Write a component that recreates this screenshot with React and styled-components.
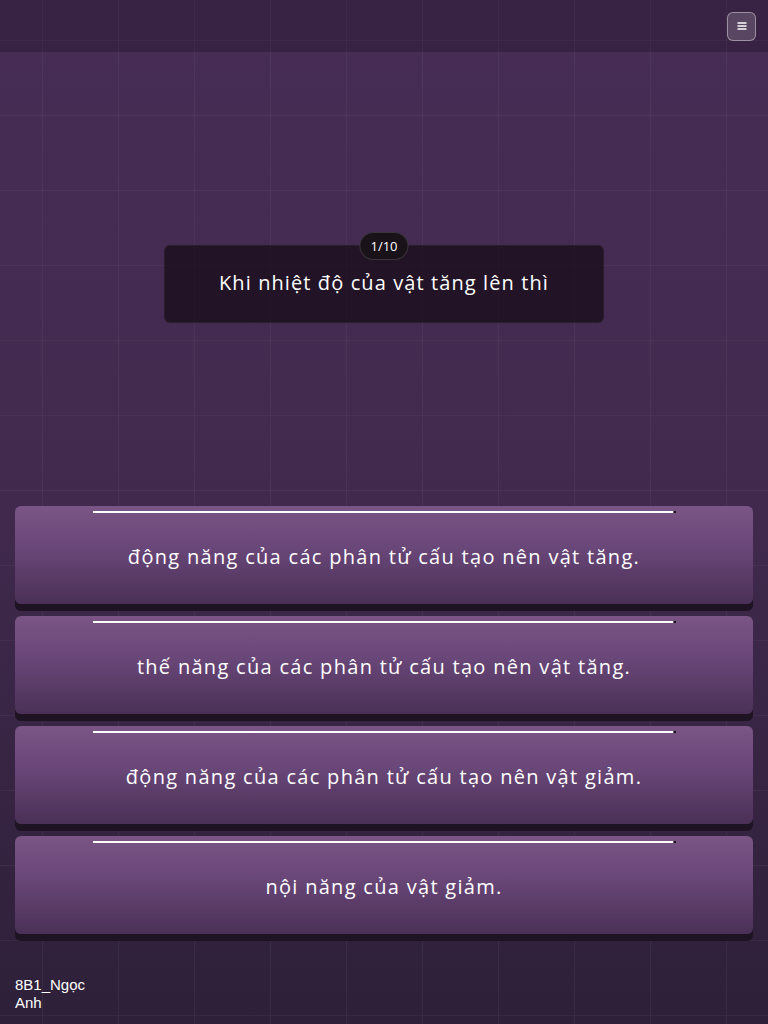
import React from "react";
import styled, { createGlobalStyle } from "styled-components";

const answers = [
  "động năng của các phân tử cấu tạo nên vật tăng.",
  "thế năng của các phân tử cấu tạo nên vật tăng.",
  "động năng của các phân tử cấu tạo nên vật giảm.",
  "nội năng của vật giảm.",
];

function MenuIcon() {
  return (
    <svg width="10" height="10" viewBox="0 0 10 10">
      <path d="M1 2h8M1 5h8M1 8h8" stroke="#fff" strokeWidth="1.4" strokeLinecap="round" />
    </svg>
  );
}

export default function App() {
  return (
    <>
      <GlobalStyle />
      <Page>
        <Header>
          <MenuButton>
            <MenuIcon />
          </MenuButton>
        </Header>
        <QuestionArea>
          <QuestionCard>
            <Counter>1/10</Counter>
            <QuestionText>Khi nhiệt độ của vật tăng lên thì</QuestionText>
          </QuestionCard>
        </QuestionArea>
        <AnswerList>
          {answers.map((a) => (
            <Answer key={a}>
              <TimerBar />
              {a}
            </Answer>
          ))}
        </AnswerList>
        <Footer>
          <Player>8B1_Ngọc Anh</Player>
        </Footer>
      </Page>
    </>
  );
}

const GlobalStyle = createGlobalStyle`
  html, body {
    margin: 0;
    padding: 0;
    background: #2e2039;
  }
  * {
    box-sizing: border-box;
  }
`;

const Page = styled.div`
  min-height: 1024px;
  display: flex;
  flex-direction: column;
  font-family: "Open Sans", Lato, sans-serif;
  color: #fff;
  background-color: #3f2a4b;
  background-image:
    linear-gradient(to right, transparent 42px, rgba(255, 255, 255, 0.045) 42px, rgba(255, 255, 255, 0.045) 43px, transparent 43px),
    linear-gradient(to bottom, transparent 40px, rgba(255, 255, 255, 0.04) 40px, rgba(255, 255, 255, 0.04) 41px, transparent 41px),
    linear-gradient(to bottom, #472d55 0%, #422a4f 45%, #2e2039 100%);
  background-size: 76px 100%, 100% 75px, 100% 100%;
`;

const Header = styled.header`
  height: 52px;
  display: flex;
  align-items: center;
  justify-content: flex-end;
  padding-right: 12px;
  background: rgba(20, 12, 26, 0.28);
`;

const MenuButton = styled.button`
  width: 29px;
  height: 29px;
  padding: 0;
  display: flex;
  align-items: center;
  justify-content: center;
  border-radius: 6px;
  border: 1px solid rgba(255, 255, 255, 0.4);
  background: rgba(255, 255, 255, 0.16);
  cursor: pointer;
`;

const QuestionArea = styled.section`
  display: flex;
  justify-content: center;
  padding-top: 193px;
`;

const QuestionCard = styled.div`
  position: relative;
  width: 440px;
  height: 78px;
  display: flex;
  align-items: center;
  justify-content: center;
  border-radius: 6px;
  background: rgba(24, 14, 26, 0.78);
  border: 1px solid rgba(255, 255, 255, 0.04);
`;

const Counter = styled.span`
  position: absolute;
  top: -14px;
  left: 50%;
  transform: translateX(-50%);
  padding: 6px 10px;
  border-radius: 14px;
  background: #1a1219;
  border: 1px solid rgba(255, 255, 255, 0.14);
  font-size: 13px;
  line-height: 14px;
`;

const QuestionText = styled.p`
  margin: 0 0 4px;
  font-size: 20px;
  letter-spacing: 1.1px;
`;

const AnswerList = styled.section`
  display: flex;
  flex-direction: column;
  gap: 12px;
  padding: 0 15px;
  margin-top: 183px;
`;

const Answer = styled.button`
  position: relative;
  height: 98px;
  width: 100%;
  display: flex;
  align-items: center;
  justify-content: center;
  border: none;
  border-radius: 6px;
  background: linear-gradient(to bottom, #7a5586 0%, #684677 45%, #4a3056 100%);
  box-shadow: 0 7px 0 #1d1322;
  color: #fff;
  font-family: inherit;
  font-size: 20px;
  letter-spacing: 1.3px;
  padding: 3px 0 0;
  cursor: pointer;
`;

const TimerBar = styled.span`
  position: absolute;
  top: 5px;
  left: 78px;
  width: 580px;
  height: 2px;
  background: #fff;
  &::after {
    content: "";
    position: absolute;
    right: -3px;
    top: 0;
    width: 2px;
    height: 2px;
    background: #111;
  }
`;

const Footer = styled.footer`
  padding: 42px 15px 0;
`;

const Player = styled.div`
  width: 84px;
  font-family: "Liberation Sans", Arial, sans-serif;
  font-size: 15px;
  line-height: 18px;
`;
